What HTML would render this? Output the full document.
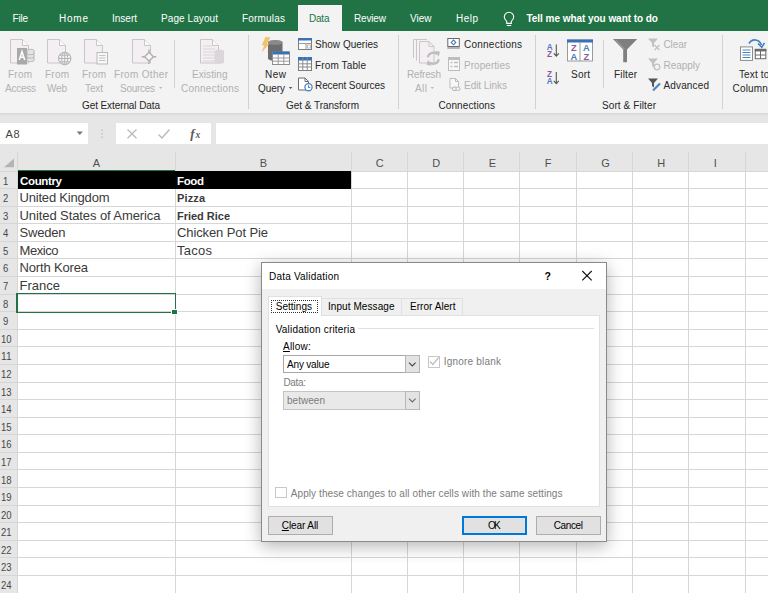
<!DOCTYPE html>
<html><head><meta charset="utf-8"><title>Excel Data Validation</title>
<style>
html,body{margin:0;padding:0;background:#fff;}
#root{position:relative;width:768px;height:593px;overflow:hidden;background:#fff;font-family:"Liberation Sans",sans-serif;}
#root div,#root svg{position:absolute;}
.t{position:absolute;white-space:pre;font-family:"Liberation Sans",sans-serif;}
.t u{text-decoration:underline;text-underline-offset:1px;}
.sep{width:1px;background:#d2d2d2;}
.gl{background:#d6d6d6;}

</style></head>
<body>
<div id="root">
<!-- tab bar -->
<div style="left:0;top:0;width:768px;height:31px;background:#217346"></div>
<div style="left:298px;top:5px;width:43.5px;height:27px;background:#f3f3f3"></div>
<!-- ribbon -->
<div style="left:0;top:31px;width:768px;height:82px;background:#f3f3f3"></div>
<!-- formula bar area -->
<div style="left:0;top:113px;width:768px;height:39px;background:#e6e6e6"></div>
<div style="left:0;top:112.5px;width:768px;height:3.5px;background:linear-gradient(#d6d6d6,#e6e6e6)"></div>
<div style="left:0;top:122.5px;width:88.3px;height:21.7px;background:#fff"></div>
<div style="left:115.75px;top:122.5px;width:95.25px;height:21.7px;background:#fff"></div>
<div style="left:215.6px;top:122.5px;width:553px;height:21.7px;background:#fff"></div>
<!-- ribbon separators -->
<div class="sep" style="left:174px;top:40px;height:48px"></div>
<div class="sep" style="left:248px;top:35px;height:74px"></div>
<div class="sep" style="left:398px;top:35px;height:74px"></div>
<div class="sep" style="left:535px;top:35px;height:74px"></div>
<div class="sep" style="left:603px;top:40px;height:48px"></div>
<div class="sep" style="left:722px;top:35px;height:74px"></div>
<svg style="left:0;top:0" width="768" height="152" viewBox="0 0 768 152">
<defs>
<g id="pg"><path d="M0.5 0.5H12.5L18.5 6.5V24H0.5Z" fill="#f4eff3" stroke="#cbc5ca"/><path d="M12.5 0.5V6.5H18.5" fill="#fbf9fb" stroke="#cbc5ca"/></g>
<path id="fun" d="M0 0H10L6 4.5V9L4 7.5V4.5Z"/>
</defs>
<!-- bulb -->
<g fill="none" stroke="#fff" stroke-width="1.1" transform="translate(0 .8)"><path d="M506.7 20.6C505 19 504.3 17.6 504.3 16.2a4.7 4.7 0 0 1 9.4 0c0 1.400-.7 2.800-2.400 4.400v2H506.700Z"/><path d="M506.800 24.700h4.400"/></g>
<!-- From Access -->
<use href="#pg" x="10" y="39"/>
<rect x="17" y="48" width="10" height="16.500" fill="#a9a9a9"/>
<path d="M27 50.500c0-1.500 7-1.500 7 0v10c0 1.500-7 1.500-7 0Z" fill="#e4e4e4" stroke="#b5b5b5"/>
<path d="M27 53.500c0 1.500 7 1.500 7 0M27 57c0 1.500 7 1.500 7 0" fill="none" stroke="#b5b5b5"/>
<path d="M19.300 60L22 51.500L24.700 60M20.300 57.300H23.700" fill="none" stroke="#fff" stroke-width="1.500"/>
<!-- From Web -->
<use href="#pg" x="47" y="39"/>
<circle cx="64.700" cy="58.500" r="6.200" fill="#f3f3f3" stroke="#b5b5b5" stroke-width="1.100"/>
<path d="M58.500 58.500H71M64.700 52.300V64.700M60 55.200H69.400M60 61.800H69.400" stroke="#b5b5b5" stroke-width="1" fill="none"/>
<ellipse cx="64.700" cy="58.500" rx="3" ry="6.200" fill="none" stroke="#b5b5b5"/>
<!-- From Text -->
<use href="#pg" x="84" y="39"/>
<rect x="97" y="52.500" width="10.500" height="11.500" fill="#f8f8f8" stroke="#b9b9b9"/>
<path d="M99 55.500H105.500M99 58H105.500M99 60.500H105.500" stroke="#c4c4c4" fill="none"/>
<!-- From Other -->
<use href="#pg" x="132" y="39"/>
<path d="M149 52.300L153.400 56.700L149 61.100L144.600 56.700Z" fill="#f6f6f6" stroke="#b0b0b0" stroke-width="1.400"/>
<path d="M149 49.500V52.300M149 61.100V64M141.800 56.700H144.600M153.400 56.700H156.200" stroke="#b0b0b0" stroke-width="1.400"/>
<path d="M159 87L160.700 89L162.400 87Z" fill="#b9b9b9"/>
<!-- Existing connections -->
<use href="#pg" x="200" y="39"/>
<path d="M203 46H212M203 49H215M203 52H215M203 55H215M203 58H215M203 61H215" stroke="#d9d4d8" fill="none"/>
<path d="M214.500 51c0-1.800 9.500-1.800 9.500 0v11.500c0 1.800-9.500 1.800-9.500 0Z" fill="#dad6d9"/>
<!-- New Query -->
<path d="M268 42.500c0-3 14.500-3 14.500 0v16c0 3-14.500 3-14.500 0Z" fill="#6d6d6d"/>
<ellipse cx="275.250" cy="42.500" rx="7.250" ry="2.300" fill="#8a8a8a"/>
<path d="M265.500 36.800L270.500 37.500L266.800 43.500L269.500 43.800L261.500 52.500L264.200 45.500L261.800 45.200Z" fill="#f1c46c"/>
<rect x="272.500" y="52" width="17" height="12.500" fill="#fff" stroke="#8c8c8c"/>
<rect x="272.500" y="51.500" width="17" height="3" fill="#3673b5"/>
<path d="M278.200 54.500V64.500M283.800 54.500V64.500M272.500 58H289.500M272.500 61.200H289.500" stroke="#9a9a9a" fill="none"/>
<path d="M288.800 87L290.600 89.100L292.400 87Z" fill="#555"/>
<!-- Show Queries -->
<rect x="298.500" y="38.500" width="13" height="11" fill="#fff" stroke="#7d7d7d"/>
<rect x="298" y="38" width="14" height="2.500" fill="#3673b5"/>
<path d="M298.500 43.500H311.500M306 43.500V49.500" stroke="#9a9a9a" fill="none"/>
<rect x="307.500" y="45" width="3" height="3" fill="none" stroke="#b0b0b0" stroke-width=".8"/>
<!-- From Table -->
<rect x="298.500" y="57.500" width="13" height="13" fill="#fff" stroke="#7d7d7d"/>
<rect x="298" y="57" width="14" height="3.500" fill="#3673b5"/>
<path d="M302.800 57V70.500M307.200 57V70.500M298.500 63.800H311.500M298.500 67H311.500" stroke="#8a8a8a" fill="none"/>
<!-- Recent Sources -->
<path d="M298.500 78H305L308.500 81.500V90H298.500Z" fill="#fff" stroke="#6d6d6d"/>
<path d="M305 78V81.500H308.500" fill="none" stroke="#6d6d6d"/>
<circle cx="308.500" cy="87.300" r="3.600" fill="#fff" stroke="#3f7fc1" stroke-width="1.200"/>
<path d="M308.500 85.200V87.500H310.300" fill="none" stroke="#3f7fc1"/>
<!-- Refresh All -->
<path d="M413.500 39.500V58" stroke="#cbc5ca" fill="none"/>
<path d="M416.500 39.500V60.500" stroke="#cbc5ca" fill="none"/>
<path d="M413.500 39.500H427" stroke="#cbc5ca" fill="none"/>
<path d="M419.500 41.500H429L434 46.500V63H419.500Z" fill="#f4eff3" stroke="#cbc5ca"/>
<path d="M429 41.500V46.500H434" fill="none" stroke="#cbc5ca"/>
<g fill="none" stroke="#bdbdbd" stroke-width="2.200"><path d="M427.800 57.300a5.600 5.600 0 0 1 9.300-3.200"/><path d="M438.800 59.200a5.600 5.600 0 0 1-9.300 3.200"/></g>
<path d="M435.200 50.800L440 51.700L438.600 56.800Z" fill="#bdbdbd"/><path d="M431.400 65.700L426.600 64.800L428 59.700Z" fill="#bdbdbd"/>
<path d="M430.600 87L432.300 89L434 87Z" fill="#b9b9b9"/>
<!-- Connections small -->
<rect x="447.800" y="38.500" width="11.500" height="8" fill="#fff" stroke="#6a6a6a"/>
<path d="M447.300 48H459.800" stroke="#8a8a8a" fill="none" stroke-width="1.200"/>
<path d="M453.500 40L455.800 42.400L453.500 44.800L451.200 42.400Z" fill="#fff" stroke="#3f7fc1" stroke-width="1.100"/>
<!-- Properties -->
<rect x="448.500" y="57.500" width="11" height="13" fill="#f8f8f8" stroke="#bdbdbd"/>
<path d="M448.500 59H459.500" stroke="#bdbdbd" stroke-width="2"/>
<path d="M450.500 62.500H452.500M454 62.500H458M450.500 66.500H452.500M454 66.500H458" stroke="#bdbdbd" stroke-width="1.500"/>
<!-- Edit Links -->
<path d="M450 78.500H455.500L458.500 81.500V88H450Z" fill="#f8f8f8" stroke="#bdbdbd"/>
<path d="M455.500 78.500V81.500H458.500" fill="none" stroke="#bdbdbd"/>
<rect x="452.500" y="87" width="4" height="3.500" rx="1.500" fill="#f3f3f3" stroke="#b5b5b5"/><rect x="456" y="87" width="4" height="3.500" rx="1.500" fill="#f3f3f3" stroke="#b5b5b5"/>
<!-- AZ arrows -->
<g font-family="Liberation Sans, sans-serif" font-weight="700" font-size="8.200" text-anchor="middle">
<text x="549.600" y="49.600" fill="#4a7dbd">A</text><text x="549.600" y="56.900" fill="#8b5a9c">Z</text>
<text x="549.600" y="77.100" fill="#8b5a9c">Z</text><text x="549.600" y="84.400" fill="#4a7dbd">A</text>
</g>
<path d="M556.300 44.500V56M553.800 53.300L556.300 56.200L558.800 53.300M556.300 72V83.500M553.800 80.800L556.300 83.700L558.800 80.800" fill="none" stroke="#555" stroke-width="1.100"/>
<!-- Sort -->
<rect x="567.500" y="40" width="25" height="21" fill="#fff" stroke="#9a9a9a"/>
<rect x="567" y="39.500" width="26" height="3" fill="#3b70b3"/>
<path d="M580 42.500V61" stroke="#9a9a9a"/>
<g font-family="Liberation Sans, sans-serif" font-weight="700" font-size="9.300" text-anchor="middle">
<text x="573.800" y="51" fill="#8b5a9c">Z</text><text x="573.800" y="59.600" fill="#4a7dbd">A</text>
<text x="586.300" y="51" fill="#4a7dbd">A</text><text x="586.300" y="59.600" fill="#8b5a9c">Z</text>
</g>
<!-- Filter -->
<path d="M613 39H637.200L627 49.500V62.300H623.200V49.500Z" fill="#7f7f7f"/>
<path d="M616 40.200L624.300 49" stroke="#b5b5b5" fill="none" stroke-width=".8"/>
<!-- Clear -->
<use href="#fun" x="648" y="38.500" fill="#c1c1c1"/>
<path d="M654.500 45L659.500 50M659.500 45L654.500 50" stroke="#c1c1c1" stroke-width="1.300"/>
<!-- Reapply -->
<use href="#fun" x="648" y="58.500" fill="#c1c1c1"/>
<circle cx="657" cy="67" r="2.800" fill="none" stroke="#c1c1c1" stroke-width="1.300"/>
<!-- Advanced -->
<use href="#fun" x="648" y="78.500" fill="#555"/>
<path d="M653 90.500L660 83.500" stroke="#4a86c7" stroke-width="2.200"/>
<!-- Text to columns -->
<rect x="740.500" y="46.900" width="12" height="13.500" fill="#fff" stroke="#8a8a8a"/>
<path d="M742.500 50H750.500M742.500 52.500H750.500M742.500 55H750.500M742.500 57.500H750.500" stroke="#4a86c7"/>
<rect x="755.300" y="49.400" width="10.500" height="9.300" fill="#fff" stroke="#6a6a6a"/>
<rect x="754.800" y="48.900" width="11.500" height="2.500" fill="#6a6a6a"/>
<path d="M760.500 51V58.700M755.300 55H765.800" stroke="#6a6a6a"/>
<path d="M749 43.500c3-5 10-5 12.500 1.500" fill="none" stroke="#3f7fc1" stroke-width="1.600"/>
<path d="M758 43.500L761.800 47.300L764.500 42.800" fill="none" stroke="#3f7fc1" stroke-width="1.600"/>
<!-- name box arrow, dots, x check fx -->
<path d="M76.700 131.500H82.900L79.800 135Z" fill="#777"/>
<g fill="#b0b0b0"><rect x="101.500" y="129.500" width="1" height="1.500"/><rect x="101.500" y="133" width="1" height="1.500"/><rect x="101.500" y="136.500" width="1" height="1.500"/></g>
<path d="M127.500 129.500L136.500 138.300M136.500 129.500L127.500 138.300" stroke="#b9b9b9" stroke-width="1.200"/>
<path d="M158.500 134.500L162 138L169.500 129.500" fill="none" stroke="#b9b9b9" stroke-width="1.300"/>
<text x="190.300" y="138" font-family="Liberation Serif, serif" font-style="italic" font-weight="700" font-size="13" fill="#5a5a5a">f</text>
<text x="195.600" y="138.300" font-family="Liberation Serif, serif" font-style="italic" font-weight="700" font-size="9.500" fill="#5a5a5a">x</text>
</svg>

<!-- grid -->
<div id="grid" style="left:0;top:152px;width:768px;height:441px;background:#fff">
<div style="left:0;top:0;width:768px;height:18.5px;background:#e6e6e6"></div>
<div style="left:0;top:0;width:17.5px;height:441px;background:#e6e6e6"></div>
<div class="gl" style="left:17.0px;top:0;width:1px;height:441px"></div>
<div class="gl" style="left:174.5px;top:0;width:1px;height:441px"></div>
<div class="gl" style="left:350.5px;top:0;width:1px;height:441px"></div>
<div class="gl" style="left:406.8px;top:0;width:1px;height:441px"></div>
<div class="gl" style="left:463.1px;top:0;width:1px;height:441px"></div>
<div class="gl" style="left:519.4px;top:0;width:1px;height:441px"></div>
<div class="gl" style="left:575.7px;top:0;width:1px;height:441px"></div>
<div class="gl" style="left:632.0px;top:0;width:1px;height:441px"></div>
<div class="gl" style="left:688.3px;top:0;width:1px;height:441px"></div>
<div class="gl" style="left:744.6px;top:0;width:1px;height:441px"></div>
<div class="gl" style="left:0;top:18.50px;width:768px;height:1px"></div>
<div class="gl" style="left:0;top:36.09px;width:768px;height:1px"></div>
<div class="gl" style="left:0;top:53.67px;width:768px;height:1px"></div>
<div class="gl" style="left:0;top:71.25px;width:768px;height:1px"></div>
<div class="gl" style="left:0;top:88.84px;width:768px;height:1px"></div>
<div class="gl" style="left:0;top:106.43px;width:768px;height:1px"></div>
<div class="gl" style="left:0;top:124.01px;width:768px;height:1px"></div>
<div class="gl" style="left:0;top:141.60px;width:768px;height:1px"></div>
<div class="gl" style="left:0;top:159.18px;width:768px;height:1px"></div>
<div class="gl" style="left:0;top:176.76px;width:768px;height:1px"></div>
<div class="gl" style="left:0;top:194.35px;width:768px;height:1px"></div>
<div class="gl" style="left:0;top:211.94px;width:768px;height:1px"></div>
<div class="gl" style="left:0;top:229.52px;width:768px;height:1px"></div>
<div class="gl" style="left:0;top:247.11px;width:768px;height:1px"></div>
<div class="gl" style="left:0;top:264.69px;width:768px;height:1px"></div>
<div class="gl" style="left:0;top:282.28px;width:768px;height:1px"></div>
<div class="gl" style="left:0;top:299.86px;width:768px;height:1px"></div>
<div class="gl" style="left:0;top:317.44px;width:768px;height:1px"></div>
<div class="gl" style="left:0;top:335.03px;width:768px;height:1px"></div>
<div class="gl" style="left:0;top:352.62px;width:768px;height:1px"></div>
<div class="gl" style="left:0;top:370.20px;width:768px;height:1px"></div>
<div class="gl" style="left:0;top:387.79px;width:768px;height:1px"></div>
<div class="gl" style="left:0;top:405.37px;width:768px;height:1px"></div>
<div class="gl" style="left:0;top:422.96px;width:768px;height:1px"></div>
<div class="gl" style="left:0;top:440.54px;width:768px;height:1px"></div>
<svg style="left:0;top:0" width="18" height="19" viewBox="0 0 18 19"><path d="M14 6.500V15.300H4Z" fill="#b4b4b4"/></svg>
<div style="left:17.5px;top:17.5px;width:157.5px;height:1.5px;background:#217346"></div>
<div style="left:16.5px;top:142.10px;width:1.5px;height:17.59px;background:#217346"></div>
</div>
<!-- header row black -->
<div style="left:17.5px;top:170.7px;width:333.5px;height:18.3px;background:#000"></div>
<!-- selected cell -->
<div style="left:16.25px;top:293px;width:159.5px;height:19.6px;border:1.75px solid #217346;box-sizing:border-box"></div>
<div style="left:171.3px;top:308.8px;width:6.4px;height:6.2px;background:#217346;border:1px solid #fff;box-sizing:border-box"></div>
<!-- dialog -->
<div style="left:261px;top:262px;width:346px;height:280px;background:#f0f0f0;border:1px solid #8a8a8a;box-sizing:border-box;box-shadow:0 4px 16px rgba(0,0,0,.30)"></div>
<div style="left:262px;top:263px;width:344px;height:26px;background:#fff"></div>
<div style="left:267.5px;top:314.5px;width:332px;height:192px;background:#fff;border:1px solid #e0e0e0;box-sizing:border-box"></div>
<div style="left:321px;top:298px;width:81px;height:17px;border:1px solid #e0e0e0;border-bottom:none;box-sizing:border-box;background:#f0f0f0"></div>
<div style="left:401px;top:298px;width:61.5px;height:17px;border:1px solid #e0e0e0;border-bottom:none;box-sizing:border-box;background:#f0f0f0"></div>
<div style="left:267.5px;top:295.5px;width:54px;height:20px;border:1px solid #e0e0e0;border-bottom:none;box-sizing:border-box;background:#fff"></div>
<div style="left:271px;top:299.5px;width:46.5px;height:13.5px;border:1px dotted #333;box-sizing:border-box"></div>
<div style="left:358px;top:328px;width:236px;height:1px;background:#e0e0e0"></div>
<!-- combos -->
<div style="left:283px;top:354.7px;width:137px;height:18.8px;background:#fff;border:1px solid #a6a6a6;box-sizing:border-box"></div>
<div style="left:405px;top:354.7px;width:15px;height:18.8px;background:#e3e3e3;border:1px solid #b4b4b4;box-sizing:border-box"></div>
<div style="left:283px;top:390.8px;width:137px;height:18.8px;background:#e9e9e9;border:1px solid #c4c4c4;box-sizing:border-box"></div>
<div style="left:405px;top:390.8px;width:15px;height:18.8px;background:#e3e3e3;border:1px solid #b9b9b9;box-sizing:border-box"></div>
<!-- checkboxes -->
<div style="left:428px;top:355.5px;width:12px;height:12px;background:#fff;border:1px solid #c8c8c8;box-sizing:border-box"></div>
<div style="left:275px;top:487px;width:12px;height:11px;background:#fff;border:1px solid #c8c8c8;box-sizing:border-box"></div>
<!-- buttons -->
<div style="left:267.5px;top:515.5px;width:65px;height:19.5px;background:#e1e1e1;border:1px solid #adadad;box-sizing:border-box"></div>
<div style="left:462px;top:515.5px;width:65px;height:19.5px;background:#e1e1e1;border:2px solid #0078d7;box-sizing:border-box"></div>
<div style="left:536px;top:515.5px;width:65px;height:19.5px;background:#e1e1e1;border:1px solid #adadad;box-sizing:border-box"></div>
<svg style="left:0;top:0" width="768" height="593" viewBox="0 0 768 593">
<path d="M582.300 271L591.700 280.300M591.700 271L582.300 280.300" stroke="#111" stroke-width="1.100" fill="none"/>
<path d="M409 362.700L412.300 366L415.600 362.700" stroke="#444" stroke-width="1.100" fill="none"/>
<path d="M409 398.700L412.300 402L415.600 398.700" stroke="#6a6a6a" stroke-width="1.100" fill="none"/>
<path d="M430 361.500L432.800 364.500L438.800 357.500" stroke="#bdbdbd" stroke-width="1.200" fill="none"/>
</svg>

<span class="t" style="left:12.50px;top:11px;font-size:10px;line-height:15px;color:#fff;letter-spacing:-0.208px;">File</span>
<span class="t" style="left:59.00px;top:11px;font-size:10px;line-height:15px;color:#fff;letter-spacing:0.771px;">Home</span>
<span class="t" style="left:112.00px;top:11px;font-size:10px;line-height:15px;color:#fff;letter-spacing:-0.003px;">Insert</span>
<span class="t" style="left:161.00px;top:11px;font-size:10px;line-height:15px;color:#fff;letter-spacing:0.083px;">Page Layout</span>
<span class="t" style="left:242.00px;top:11px;font-size:10px;line-height:15px;color:#fff;letter-spacing:0.188px;">Formulas</span>
<span class="t" style="left:354.00px;top:11px;font-size:10px;line-height:15px;color:#fff;letter-spacing:-0.159px;">Review</span>
<span class="t" style="left:410.00px;top:11px;font-size:10px;line-height:15px;color:#fff;letter-spacing:0.000px;">View</span>
<span class="t" style="left:456.00px;top:11px;font-size:10px;line-height:15px;color:#fff;letter-spacing:0.474px;">Help</span>
<span class="t" style="left:309.00px;top:11px;font-size:10px;line-height:15px;color:#217346;letter-spacing:-0.208px;">Data</span>
<span class="t" style="left:526.50px;top:11px;font-size:10px;line-height:15px;color:#fff;letter-spacing:-0.043px;font-weight:700;">Tell me what you want to do</span>
<span class="t" style="left:8.00px;top:67px;font-size:10px;line-height:15px;color:#b1b1b1;letter-spacing:0.219px;">From</span>
<span class="t" style="left:5.00px;top:81px;font-size:10px;line-height:15px;color:#b1b1b1;letter-spacing:-0.247px;">Access</span>
<span class="t" style="left:45.00px;top:67px;font-size:10px;line-height:15px;color:#b1b1b1;letter-spacing:0.219px;">From</span>
<span class="t" style="left:47.00px;top:81px;font-size:10px;line-height:15px;color:#b1b1b1;letter-spacing:-0.195px;">Web</span>
<span class="t" style="left:82.00px;top:67px;font-size:10px;line-height:15px;color:#b1b1b1;letter-spacing:0.219px;">From</span>
<span class="t" style="left:85.00px;top:81px;font-size:10px;line-height:15px;color:#b1b1b1;letter-spacing:-0.115px;">Text</span>
<span class="t" style="left:114.00px;top:67px;font-size:10px;line-height:15px;color:#b1b1b1;letter-spacing:0.319px;">From Other</span>
<span class="t" style="left:120.00px;top:81px;font-size:10px;line-height:15px;color:#b1b1b1;letter-spacing:-0.281px;">Sources</span>
<span class="t" style="left:192.00px;top:67px;font-size:10px;line-height:15px;color:#b1b1b1;letter-spacing:0.069px;">Existing</span>
<span class="t" style="left:181.00px;top:81px;font-size:10px;line-height:15px;color:#b1b1b1;letter-spacing:0.241px;">Connections</span>
<span class="t" style="left:82.00px;top:98px;font-size:10px;line-height:15px;color:#262626;letter-spacing:-0.093px;">Get External Data</span>
<span class="t" style="left:265.00px;top:67px;font-size:10px;line-height:15px;color:#262626;letter-spacing:0.492px;">New</span>
<span class="t" style="left:258.00px;top:81px;font-size:10px;line-height:15px;color:#262626;letter-spacing:-0.059px;">Query</span>
<span class="t" style="left:315.00px;top:37px;font-size:10px;line-height:15px;color:#262626;letter-spacing:0.017px;">Show Queries</span>
<span class="t" style="left:315.00px;top:58px;font-size:10px;line-height:15px;color:#262626;letter-spacing:0.128px;">From Table</span>
<span class="t" style="left:315.00px;top:78px;font-size:10px;line-height:15px;color:#262626;letter-spacing:-0.089px;">Recent Sources</span>
<span class="t" style="left:286.00px;top:98px;font-size:10px;line-height:15px;color:#262626;letter-spacing:-0.026px;">Get &amp; Transform</span>
<span class="t" style="left:407.00px;top:67px;font-size:10px;line-height:15px;color:#b1b1b1;letter-spacing:-0.169px;">Refresh</span>
<span class="t" style="left:415.00px;top:81px;font-size:10px;line-height:15px;color:#b1b1b1;letter-spacing:0.438px;">All</span>
<span class="t" style="left:464.00px;top:37px;font-size:10px;line-height:15px;color:#262626;letter-spacing:0.241px;">Connections</span>
<span class="t" style="left:464.00px;top:58px;font-size:10px;line-height:15px;color:#b1b1b1;letter-spacing:0.047px;">Properties</span>
<span class="t" style="left:464.00px;top:78px;font-size:10px;line-height:15px;color:#b1b1b1;letter-spacing:-0.040px;">Edit Links</span>
<span class="t" style="left:438.50px;top:98px;font-size:10px;line-height:15px;color:#262626;letter-spacing:0.091px;">Connections</span>
<span class="t" style="left:571.00px;top:67px;font-size:10px;line-height:15px;color:#262626;letter-spacing:0.219px;">Sort</span>
<span class="t" style="left:614.00px;top:67px;font-size:10px;line-height:15px;color:#262626;letter-spacing:0.153px;">Filter</span>
<span class="t" style="left:663.50px;top:37px;font-size:10px;line-height:15px;color:#b1b1b1;letter-spacing:-0.102px;">Clear</span>
<span class="t" style="left:663.50px;top:58px;font-size:10px;line-height:15px;color:#b1b1b1;letter-spacing:-0.034px;">Reapply</span>
<span class="t" style="left:663.50px;top:78px;font-size:10px;line-height:15px;color:#262626;letter-spacing:0.145px;">Advanced</span>
<span class="t" style="left:602.00px;top:98px;font-size:10px;line-height:15px;color:#262626;letter-spacing:0.100px;">Sort &amp; Filter</span>
<span class="t" style="left:739.00px;top:67px;font-size:10px;line-height:15px;color:#262626;letter-spacing:0.122px;">Text to</span>
<span class="t" style="left:732.60px;top:81px;font-size:10px;line-height:15px;color:#262626;letter-spacing:0.155px;">Columns</span>
<span class="t" style="left:5.50px;top:126px;font-size:11px;line-height:16px;color:#444;letter-spacing:0.731px;">A8</span>
<span class="t" style="left:92.70px;top:155px;font-size:11px;line-height:16px;color:#505050;letter-spacing:-0.744px;">A</span>
<span class="t" style="left:259.70px;top:155px;font-size:11px;line-height:16px;color:#505050;letter-spacing:-0.744px;">B</span>
<span class="t" style="left:375.70px;top:155px;font-size:11px;line-height:16px;color:#505050;letter-spacing:-1.353px;">C</span>
<span class="t" style="left:432.20px;top:155px;font-size:11px;line-height:16px;color:#505050;letter-spacing:-1.353px;">D</span>
<span class="t" style="left:488.70px;top:155px;font-size:11px;line-height:16px;color:#505050;letter-spacing:-0.744px;">E</span>
<span class="t" style="left:544.70px;top:155px;font-size:11px;line-height:16px;color:#505050;letter-spacing:-0.134px;">F</span>
<span class="t" style="left:601.20px;top:155px;font-size:11px;line-height:16px;color:#505050;letter-spacing:-1.963px;">G</span>
<span class="t" style="left:657.20px;top:155px;font-size:11px;line-height:16px;color:#505050;letter-spacing:-1.353px;">H</span>
<span class="t" style="left:713.70px;top:155px;font-size:11px;line-height:16px;color:#505050;letter-spacing:3.537px;">I</span>
<span class="t" style="left:3.25px;top:173px;font-size:11px;line-height:16px;color:#484848;transform-origin:0 0;transform:scaleX(0.8653);">1</span>
<span class="t" style="left:3.25px;top:190px;font-size:11px;line-height:16px;color:#484848;transform-origin:0 0;transform:scaleX(0.8653);">2</span>
<span class="t" style="left:3.25px;top:208px;font-size:11px;line-height:16px;color:#484848;transform-origin:0 0;transform:scaleX(0.8653);">3</span>
<span class="t" style="left:3.25px;top:225px;font-size:11px;line-height:16px;color:#484848;transform-origin:0 0;transform:scaleX(0.8653);">4</span>
<span class="t" style="left:3.25px;top:243px;font-size:11px;line-height:16px;color:#484848;transform-origin:0 0;transform:scaleX(0.8653);">5</span>
<span class="t" style="left:3.25px;top:260px;font-size:11px;line-height:16px;color:#484848;transform-origin:0 0;transform:scaleX(0.8653);">6</span>
<span class="t" style="left:3.25px;top:278px;font-size:11px;line-height:16px;color:#484848;transform-origin:0 0;transform:scaleX(0.8653);">7</span>
<span class="t" style="left:3.25px;top:296px;font-size:11px;line-height:16px;color:#484848;transform-origin:0 0;transform:scaleX(0.8653);">8</span>
<span class="t" style="left:3.25px;top:313px;font-size:11px;line-height:16px;color:#484848;transform-origin:0 0;transform:scaleX(0.8653);">9</span>
<span class="t" style="left:0.60px;top:331px;font-size:11px;line-height:16px;color:#484848;transform-origin:0 0;transform:scaleX(0.8653);">10</span>
<span class="t" style="left:0.60px;top:348px;font-size:11px;line-height:16px;color:#484848;transform-origin:0 0;transform:scaleX(0.9280);">11</span>
<span class="t" style="left:0.60px;top:366px;font-size:11px;line-height:16px;color:#484848;transform-origin:0 0;transform:scaleX(0.8653);">12</span>
<span class="t" style="left:0.60px;top:384px;font-size:11px;line-height:16px;color:#484848;transform-origin:0 0;transform:scaleX(0.8653);">13</span>
<span class="t" style="left:0.60px;top:401px;font-size:11px;line-height:16px;color:#484848;transform-origin:0 0;transform:scaleX(0.8653);">14</span>
<span class="t" style="left:0.60px;top:419px;font-size:11px;line-height:16px;color:#484848;transform-origin:0 0;transform:scaleX(0.8653);">15</span>
<span class="t" style="left:0.60px;top:436px;font-size:11px;line-height:16px;color:#484848;transform-origin:0 0;transform:scaleX(0.8653);">16</span>
<span class="t" style="left:0.60px;top:454px;font-size:11px;line-height:16px;color:#484848;transform-origin:0 0;transform:scaleX(0.8653);">17</span>
<span class="t" style="left:0.60px;top:472px;font-size:11px;line-height:16px;color:#484848;transform-origin:0 0;transform:scaleX(0.8653);">18</span>
<span class="t" style="left:0.60px;top:489px;font-size:11px;line-height:16px;color:#484848;transform-origin:0 0;transform:scaleX(0.8653);">19</span>
<span class="t" style="left:0.60px;top:507px;font-size:11px;line-height:16px;color:#484848;transform-origin:0 0;transform:scaleX(0.8653);">20</span>
<span class="t" style="left:0.60px;top:524px;font-size:11px;line-height:16px;color:#484848;transform-origin:0 0;transform:scaleX(0.8653);">21</span>
<span class="t" style="left:0.60px;top:542px;font-size:11px;line-height:16px;color:#484848;transform-origin:0 0;transform:scaleX(0.8653);">22</span>
<span class="t" style="left:0.60px;top:559px;font-size:11px;line-height:16px;color:#484848;transform-origin:0 0;transform:scaleX(0.8653);">23</span>
<span class="t" style="left:0.60px;top:577px;font-size:11px;line-height:16px;color:#484848;transform-origin:0 0;transform:scaleX(0.8653);">24</span>
<span class="t" style="left:20.00px;top:173px;font-size:11.5px;line-height:16px;color:#fff;letter-spacing:-0.349px;font-weight:700;">Country</span>
<span class="t" style="left:177.00px;top:173px;font-size:11.5px;line-height:16px;color:#fff;letter-spacing:-0.370px;font-weight:700;">Food</span>
<span class="t" style="left:19.50px;top:188px;font-size:13px;line-height:19px;color:#3a3a3a;letter-spacing:-0.192px;">United Kingdom</span>
<span class="t" style="left:19.50px;top:206px;font-size:13px;line-height:19px;color:#3a3a3a;letter-spacing:-0.090px;">United States of America</span>
<span class="t" style="left:19.50px;top:223px;font-size:13px;line-height:19px;color:#3a3a3a;letter-spacing:-0.197px;">Sweden</span>
<span class="t" style="left:19.50px;top:241px;font-size:13px;line-height:19px;color:#3a3a3a;letter-spacing:-0.438px;">Mexico</span>
<span class="t" style="left:19.50px;top:258px;font-size:13px;line-height:19px;color:#3a3a3a;letter-spacing:-0.159px;">North Korea</span>
<span class="t" style="left:19.50px;top:276px;font-size:13px;line-height:19px;color:#3a3a3a;letter-spacing:0.006px;">France</span>
<span class="t" style="left:177.00px;top:190px;font-size:11px;line-height:16px;color:#3a3a3a;letter-spacing:0.121px;font-weight:700;">Pizza</span>
<span class="t" style="left:177.00px;top:208px;font-size:11px;line-height:16px;color:#3a3a3a;letter-spacing:-0.021px;font-weight:700;">Fried Rice</span>
<span class="t" style="left:177.00px;top:223px;font-size:13px;line-height:19px;color:#3a3a3a;letter-spacing:-0.107px;">Chicken Pot Pie</span>
<span class="t" style="left:177.00px;top:241px;font-size:13px;line-height:19px;color:#3a3a3a;letter-spacing:0.258px;">Tacos</span>
<span class="t" style="left:269.00px;top:269px;font-size:10px;line-height:15px;color:#000;letter-spacing:0.208px;">Data Validation</span>
<span class="t" style="left:544.50px;top:268px;font-size:10.5px;line-height:16px;color:#000;letter-spacing:-0.922px;font-weight:700;">?</span>
<span class="t" style="left:275.75px;top:299px;font-size:10px;line-height:15px;color:#000;letter-spacing:0.016px;">Settings</span>
<span class="t" style="left:328.00px;top:299px;font-size:10px;line-height:15px;color:#000;letter-spacing:0.074px;">Input Message</span>
<span class="t" style="left:410.00px;top:299px;font-size:10px;line-height:15px;color:#000;letter-spacing:0.048px;">Error Alert</span>
<span class="t" style="left:275.75px;top:322px;font-size:10px;line-height:15px;color:#000;letter-spacing:0.182px;">Validation criteria</span>
<span class="t" style="left:283.00px;top:339px;font-size:10px;line-height:15px;color:#000;letter-spacing:0.212px;"><u>A</u>llow:</span>
<span class="t" style="left:287.00px;top:357px;font-size:10px;line-height:15px;color:#000;letter-spacing:-0.178px;">Any value</span>
<span class="t" style="left:443.75px;top:354px;font-size:10px;line-height:15px;color:#7c7c7c;letter-spacing:0.200px;">Ignore blank</span>
<span class="t" style="left:283.50px;top:375px;font-size:10px;line-height:15px;color:#7c7c7c;letter-spacing:-0.352px;">Data:</span>
<span class="t" style="left:287.00px;top:393px;font-size:10px;line-height:15px;color:#7c7c7c;letter-spacing:0.031px;">between</span>
<span class="t" style="left:290.75px;top:486px;font-size:10px;line-height:15px;color:#7c7c7c;letter-spacing:0.082px;">Apply these changes to all other cells with the same settings</span>
<span class="t" style="left:281.75px;top:518px;font-size:10px;line-height:15px;color:#000;letter-spacing:-0.094px;"><u>C</u>lear All</span>
<span class="t" style="left:488.00px;top:518px;font-size:10px;line-height:15px;color:#000;letter-spacing:-1.703px;">OK</span>
<span class="t" style="left:553.75px;top:518px;font-size:10px;line-height:15px;color:#000;letter-spacing:-0.378px;">Cancel</span>
</div>
</body></html>
